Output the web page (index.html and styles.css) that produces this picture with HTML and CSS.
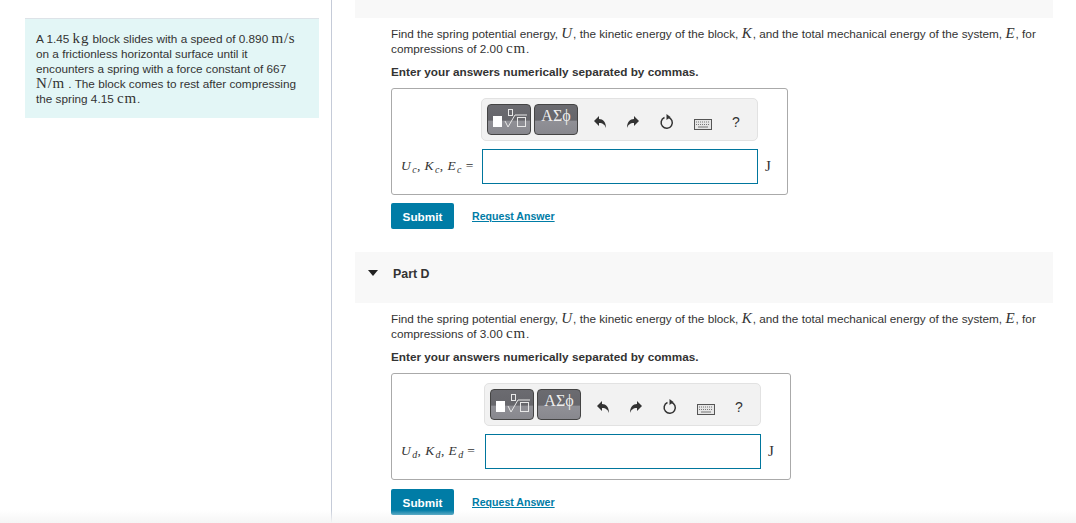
FILE: index.html
```html
<!DOCTYPE html>
<html lang="en">
<head>
<meta charset="utf-8">
<title>Spring problem</title>
<link rel="stylesheet" href="styles.css">
</head>
<body>
<div class="page">
  <aside class="side">
    <div class="intro">A 1.45 <span class="m">kg</span> block slides with a speed of 0.890 <span class="m">m/s</span> on a frictionless horizontal surface until it encounters a spring with a force constant of 667 <span class="m">N/m</span> . The block comes to rest after compressing the spring 4.15 <span class="m">cm</span>.</div>
  </aside>
  <main class="main">
    <div class="bar top"></div>
    <section class="part">
      <p class="q">Find the spring potential energy, <i class="m v">U</i>, the kinetic energy of the block, <i class="m v">K</i>, and the total mechanical energy of the system, <i class="m v">E</i>, for compressions of 2.00 <span class="m">cm</span>.</p>
      <p class="hint">Enter your answers numerically separated by commas.</p>
      <div class="box">
        <div class="tools">
          <span class="tbtn t1"><svg width="42" height="28" viewBox="0 0 42 28"><rect x="5" y="10" width="9" height="11" fill="#fff"/><path d="M17 15l3 6 7-12h12" fill="none" stroke="#e8e8e8"/><rect x="20.500" y="3.500" width="4" height="6" fill="none" stroke="#e8e8e8"/><rect x="29.500" y="11.500" width="8" height="9" fill="none" stroke="#e8e8e8"/></svg></span>
          <span class="tbtn t2">ΑΣϕ</span>
          <span class="ticons">
            <svg class="ic" width="14" height="14" viewBox="0 0 14 14"><path d="M1 6l5-5v3c4 0 7 3 7 9-1-3-3-5-7-5v3z" fill="#333"/></svg>
            <svg class="ic" width="14" height="14" viewBox="0 0 14 14"><path d="M13 6L8 1v3c-4 0-7 3-7 9 1-3 3-5 7-5v3z" fill="#333"/></svg>
            <svg class="ic" width="16" height="16" viewBox="0 0 16 16"><path d="M9 3.200a5.600 5.600 0 1 1-3.500.3" fill="none" stroke="#333" stroke-width="1.500"/><path d="M7.500 0l4 3-4 3z" fill="#333"/></svg>
            <svg class="ic kbd" width="18" height="11" viewBox="0 0 18 11"><rect x=".5" y=".5" width="17" height="10" fill="#e6e6e6" stroke="#555"/><path d="M2 3h14M2 5.500h14" stroke="#777" stroke-dasharray="1 1"/><path d="M4 8h10" stroke="#777"/></svg>
            <span class="help">?</span>
          </span>
        </div>
        <span class="lab lab-c"><i>U<sub>c</sub></i>, <i>K<sub>c</sub></i>, <i>E<sub>c</sub></i> =</span>
        <span class="field"></span>
        <span class="unit">J</span>
      </div>
      <div class="actions"><span class="submit">Submit</span><a class="req">Request Answer</a></div>
    </section>
    <div class="bar head">
      <svg class="caret" width="10" height="6" viewBox="0 0 10 6"><path d="M0 0h10L5 6z" fill="#222"/></svg>
      <h3>Part D</h3>
    </div>
    <section class="part">
      <p class="q">Find the spring potential energy, <i class="m v">U</i>, the kinetic energy of the block, <i class="m v">K</i>, and the total mechanical energy of the system, <i class="m v">E</i>, for compressions of 3.00 <span class="m">cm</span>.</p>
      <p class="hint">Enter your answers numerically separated by commas.</p>
      <div class="box">
        <div class="tools">
          <span class="tbtn t1"><svg width="42" height="28" viewBox="0 0 42 28"><rect x="5" y="10" width="9" height="11" fill="#fff"/><path d="M17 15l3 6 7-12h12" fill="none" stroke="#e8e8e8"/><rect x="20.500" y="3.500" width="4" height="6" fill="none" stroke="#e8e8e8"/><rect x="29.500" y="11.500" width="8" height="9" fill="none" stroke="#e8e8e8"/></svg></span>
          <span class="tbtn t2">ΑΣϕ</span>
          <span class="ticons">
            <svg class="ic" width="14" height="14" viewBox="0 0 14 14"><path d="M1 6l5-5v3c4 0 7 3 7 9-1-3-3-5-7-5v3z" fill="#333"/></svg>
            <svg class="ic" width="14" height="14" viewBox="0 0 14 14"><path d="M13 6L8 1v3c-4 0-7 3-7 9 1-3 3-5 7-5v3z" fill="#333"/></svg>
            <svg class="ic" width="16" height="16" viewBox="0 0 16 16"><path d="M9 3.200a5.600 5.600 0 1 1-3.500.3" fill="none" stroke="#333" stroke-width="1.500"/><path d="M7.500 0l4 3-4 3z" fill="#333"/></svg>
            <svg class="ic kbd" width="18" height="11" viewBox="0 0 18 11"><rect x=".5" y=".5" width="17" height="10" fill="#e6e6e6" stroke="#555"/><path d="M2 3h14M2 5.500h14" stroke="#777" stroke-dasharray="1 1"/><path d="M4 8h10" stroke="#777"/></svg>
            <span class="help">?</span>
          </span>
        </div>
        <span class="lab lab-d"><i>U<sub>d</sub></i>, <i>K<sub>d</sub></i>, <i>E<sub>d</sub></i> =</span>
        <span class="field"></span>
        <span class="unit">J</span>
      </div>
      <div class="actions"><span class="submit">Submit</span><a class="req">Request Answer</a></div>
    </section>
  </main>
  <div class="fade"></div>
</div>
</body>
</html>
```
FILE: styles.css
```css
* { box-sizing: border-box; }
html, body { margin: 0; height: 523px; overflow: hidden; background: #fff; }
body { font-family: "Liberation Sans", Arial, sans-serif; font-size: 11.75px; line-height: 15px; color: #333; }
.page { display: flex; height: 523px; position: relative; }
.side { width: 332px; flex: none; padding: 18px 12px 0 25px; border-right: 1px solid #c5cbd8; }
.intro { background: #e3f6f6; border-top: 1px solid #dde3e8; padding: 12px 20px 11px 11px; height: 100px; }
.m { font-family: "Liberation Serif", serif; font-size: 15px; line-height: 0; letter-spacing: .8px; }
.v { letter-spacing: 0; padding-right: 1px; }
.main { width: 698px; margin-left: 23px; flex: none; }
.bar { background: #f8f8f8; }
.top { height: 18px; }
.part { padding: 8px 0 0 36px; }
.q { margin: 0 0 8px; width: 655px; }
.hint { margin: 0 0 9px; font-weight: 700; }
.box { display: inline-grid; grid-template-columns: auto 276px auto; grid-template-rows: 43px 35px; row-gap: 8px; height: 107px; border: 1px solid #aaa; border-radius: 3px; padding: 9px 0 0 9px; align-items: center; vertical-align: top; }
.tools { grid-column: 2; grid-row: 1; width: 277px; height: 43px; margin-left: -1px; background: #f2f2f2; border: 1px solid #e2e2e2; border-radius: 5px; display: flex; align-items: center; padding: 0 0 0 5px; gap: 3px; }
.tbtn { width: 44px; height: 31px; border-radius: 4px; border: 1px solid #444; background: linear-gradient(#6b6b70 0, #66666b 52%, #909096 56%, #88888e 100%); color: #eee; display: flex; align-items: center; justify-content: center; }
.t2 { font-family: "Liberation Serif", serif; font-size: 16px; padding-bottom: 8px; }
.t1 svg { display: block; }
.ticons { display: flex; align-items: center; margin: 5px 0 0 12px; gap: 19px; }
.ic { display: block; flex: none; }
.kbd { margin-top: 4px; }
.help { font-size: 14px; color: #333; margin-left: 1px; }
.lab { grid-column: 1; grid-row: 2; padding-bottom: 3px; font-family: "Liberation Serif", serif; font-size: 13.5px; white-space: nowrap; letter-spacing: .4px; }
.lab-c { width: 81px; }
.lab-d { width: 84px; }
.lab sub { font-size: 10px; line-height: 0; vertical-align: -3px; padding-left: 1px; }
.field { grid-column: 2; grid-row: 2; width: 276px; height: 35px; border: 1px solid #00769d; background: #fff; }
.unit { grid-column: 3; grid-row: 2; margin: 0 16px 0 7px; font-family: "Liberation Serif", serif; font-size: 15px; }
.actions { display: flex; align-items: center; margin-top: 8px; }
.head + .part .actions { margin-top: 9px; }
.submit { width: 63px; height: 26px; background: #007ca6; color: #fff; font-size: 11.75px; font-weight: 700; border-radius: 2px; display: flex; align-items: center; justify-content: center; }
.req { margin-left: 18px; font-size: 10.600px; font-weight: 700; color: #007ca6; text-decoration: underline; }
.head { height: 51px; margin-top: 23px; display: flex; align-items: flex-start; padding: 15px 0 0 13px; }
.caret { margin: 3px 0 0 0; flex: none; }
h3 { margin: 0 0 0 15px; font-size: 12.4px; line-height: 15px; font-weight: 700; color: #333; }
.fade { position: absolute; left: 0; right: 0; bottom: 0; height: 13px; background: linear-gradient(rgba(245, 245, 245, 0), #f5f5f5); pointer-events: none; }
```
